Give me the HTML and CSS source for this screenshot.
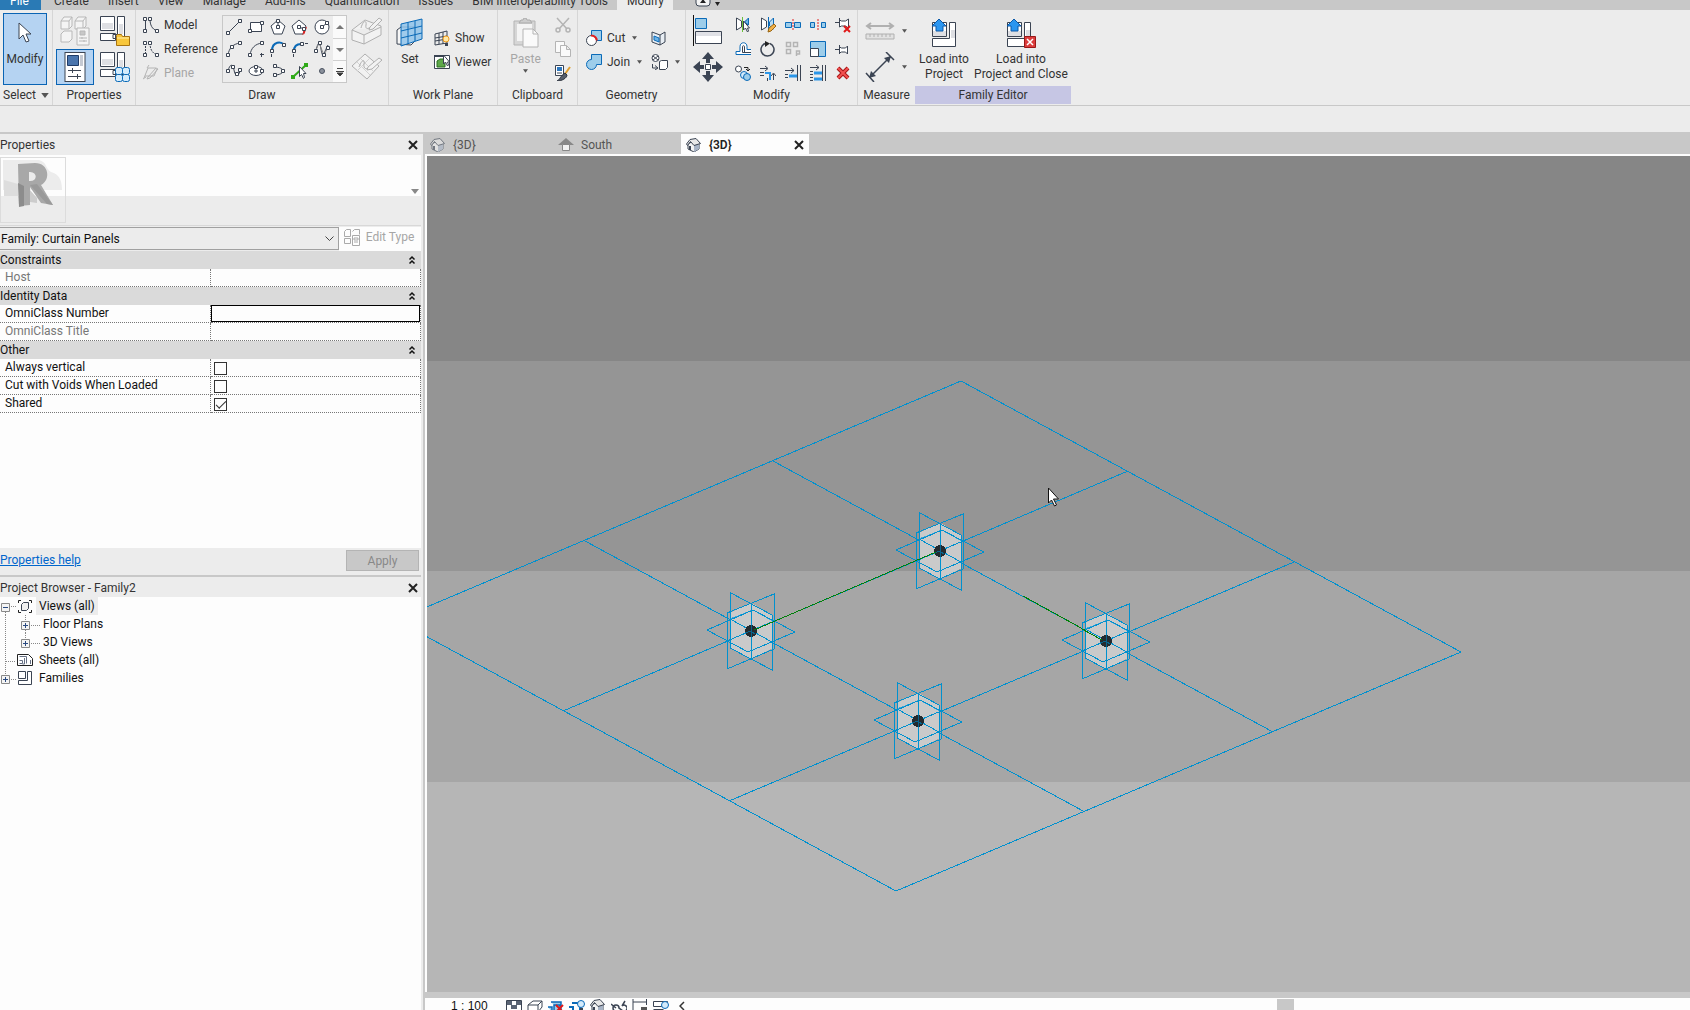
FILE: index.html
```html
<!DOCTYPE html>
<html lang="en">
<head>
<meta charset="utf-8">
<title>Family2 - Family Editor</title>
<link rel="stylesheet" href="styles.css">
</head>
<body>
<svg class="defs" aria-hidden="true">
  <symbol id="node" viewBox="0 0 4 4"><path d="M.5 .5h3v3h-3z" fill="#fff" stroke="#3b4453"/></symbol>
  <symbol id="caret" viewBox="0 0 6 4"><path d="M0 0h6L3 4z" fill="#555"/></symbol>
  <symbol id="close" viewBox="0 0 10 10"><path d="M1 1l8 8M9 1L1 9" stroke="#222" stroke-width="2" fill="none"/></symbol>
  <symbol id="fold" viewBox="0 0 8 10"><path d="M1.500 4.500L4 2l2.500 2.500M1.500 8.500L4 6l2.500 2.500" stroke="#111" stroke-width="1.500" fill="none"/></symbol>
  <symbol id="house" viewBox="0 0 16 14"><path d="M2 6v5l6 3 5-3V5L9 2z" fill="#f4f4f4" stroke="#3b4453"/><path d="M8 7v7l5-3V5z" fill="#a8b4c6"/><path d="M.5 6L4 1.500 10 .5l4.500 5L8 7.500 4.500 3.500 1.500 7.500z" fill="#e8e8e8" stroke="#3b4453"/><path d="M4 8v4" stroke="#3b4453" stroke-width="2"/></symbol>
  <symbol id="star" viewBox="-46 -42 92 84">
    <path d="M0-28L22-16V17L0 28-21 17V-18z" fill="#cacaca"/>
    <path d="M-21-12L2-21 22-10" stroke="#40a6da" fill="none"/><path d="M-21-12V17L0 28" stroke="#40a6da" fill="none"/>
    <path d="M-21-38.500L21-16V39L-21 17zM-24-18L23-37V18L-24 38zM-44-1L2-21 44 1-3 21zM0-28V28M-21-12L21 11M-24 10L23-10" fill="none" stroke="#0091cf"/>
    <circle r="6" fill="#242a2e"/><path d="M-6 2L0 0l4 3M0-6V6" stroke="#08638c" fill="none"/>
  </symbol>
</svg>

<header class="ribbon">
  <nav class="ribbon-tabs">
    <a class="tab tab-file" href="#file">File</a>
    <a class="tab" href="#create">Create</a>
    <a class="tab" href="#insert">Insert</a>
    <a class="tab" href="#view">View</a>
    <a class="tab" href="#manage">Manage</a>
    <a class="tab" href="#addins">Add-Ins</a>
    <a class="tab" href="#quant">Quantification</a>
    <a class="tab" href="#issues">Issues</a>
    <a class="tab" href="#bim">BIM Interoperability Tools</a>
    <a class="tab tab-active" href="#modify">Modify</a>
    <button class="tab-toggle" aria-label="Minimize ribbon"><svg width="26" height="14"><rect x="1" y="1" width="14" height="11" rx="3" fill="#f4f4f4" stroke="#3b4453"/><path d="M5 9h6L8 5z" fill="#222"/><path d="M20 8h5l-2.500 4z" fill="#222"/></svg></button>
  </nav>

  <div class="panels">
    <section class="panel p-select">
      <div class="panel-body">
        <button class="big selected"><span class="big-icon"><svg width="14" height="22"><path d="M1 1v16l4-4 3 7 3-1-3-7h5z" fill="#fff" stroke="#3b4453"/></svg></span>Modify</button>
      </div>
      <h2>Select <svg width="8" height="5"><use href="#caret"/></svg></h2>
    </section>

    <section class="panel p-props">
      <div class="panel-body icon-quad">
        <button aria-label="Type properties" disabled><svg width="30" height="30" fill="#f4f4f4" stroke="#b8b8b8"><path d="M1 5l3-4h8v9l-3 3H1zM15 5l3-4h8v9l-3 3h-8zM1 18l3-3h8v8l-3 3H1zM1 5h8v8M12 1L9 5M15 5h8v8M26 1l-3 4"/><path d="M17 12h12v17H17z"/><path d="M20 15h5v4h-5z" fill="#c8c8c8"/><path d="M19 22h8M19 25h8M22 21v2M24 24v2"/></svg></button>
        <button aria-label="Family category"><svg width="30" height="30"><g fill="#fff" stroke="#3b4453"><path d="M.5.500h14v14H.5zM17.500.500h7v22H13v-4h4.500zM.5 17.500h15v7H.5z"/></g><path d="M2 7h11v6H2zM19 8h4v10h-4z" fill="#dedfe3"/><path d="M16.500 29.500v-10l1-1h4l1 2h7v9z" fill="#f8c63a" stroke="#a87412"/><path d="M17 22h12" stroke="#fff0b0"/></svg></button>
        <button class="selected" aria-label="Properties"><svg width="22" height="30"><rect x="1" y=".500" width="20" height="29" fill="#fff" stroke="#3b4453"/><path d="M3.500 3.500h11v10h-11z" fill="#4a75ad" stroke="#203c68"/><path d="M16 3h3v11h-3z" fill="#c4c9d2"/><path d="M4 18.500h13M4 24.500h13M8.500 16v5M13.500 22v5" stroke="#3b4453"/></svg></button>
        <button aria-label="Family types"><svg width="30" height="30"><g fill="#fff" stroke="#3b4453"><path d="M.5.500h14v14H.5zM17.500.500h7v22H13v-4h4.500zM.5 17.500h15v7H.5z"/></g><path d="M2 7h11v6H2zM19 8h4v10h-4z" fill="#dedfe3"/><g fill="#d4ebfb" stroke="#0a6ab8"><rect x="15.500" y="15.500" width="7" height="7" rx="2"/><rect x="22.500" y="15.500" width="7" height="7" rx="2"/><rect x="15.500" y="22.500" width="7" height="7" rx="2"/><rect x="22.500" y="22.500" width="7" height="7" rx="2"/></g></svg></button>
      </div>
      <h2>Properties</h2>
    </section>

    <section class="panel p-draw">
      <div class="panel-body">
        <div class="stack three">
          <button class="small"><svg width="16" height="16" fill="none" stroke="#3b4453"><path d="M2.500 2v12M7 2c0 6 2 10 7 12"/><use href="#node" x="0" y="0" width="4" height="4"/><use href="#node" x="0" y="12" width="4" height="4"/><use href="#node" x="5" y="0" width="4" height="4"/><use href="#node" x="12" y="12" width="4" height="4"/></svg>Model</button>
          <button class="small"><svg width="16" height="16" fill="none" stroke="#3b4453"><path d="M2.500 2v12M7 2c0 6 2 10 7 12" stroke-dasharray="2 1"/><use href="#node" x="0" y="0" width="4" height="4"/><use href="#node" x="0" y="12" width="4" height="4"/><use href="#node" x="5" y="0" width="4" height="4"/><use href="#node" x="12" y="12" width="4" height="4"/></svg>Reference</button>
          <button class="small" disabled><svg width="16" height="16" fill="none" stroke="#b4b4b4"><path d="M1 13L5 3h8M2 11h9l3-7M0 14l3-2M4 3L6 0M5 12l8-9 2 1-8 9-3 1z"/></svg>Plane</button>
        </div>
        <div class="gallery">
          <div class="gallery-grid">
            <button aria-label="Line"><svg width="16" height="16"><path d="M2 14L14 2" stroke="#3b4453"/><use href="#node" y="12" width="4" height="4"/><use href="#node" x="12" width="4" height="4"/></svg></button>
            <button aria-label="Rectangle"><svg width="16" height="16"><path d="M2.500 3.500h11v9h-11z" fill="#fff" stroke="#3b4453"/><use href="#node" y="10" width="4" height="4"/><use href="#node" x="12" y="2" width="4" height="4"/></svg></button>
            <button aria-label="Inscribed polygon"><svg width="16" height="16"><path d="M8 1l7 6-3 8H4L1 7z" fill="#fff" stroke="#3b4453"/><path d="M8 2v7" stroke="#3b4453"/><use href="#node" x="6" y="6" width="4" height="4"/><use href="#node" x="6" width="4" height="4"/></svg></button>
            <button aria-label="Circumscribed polygon"><svg width="18" height="16"><path d="M8 1l7 6-3 8H4L1 7z" fill="#fff" stroke="#3b4453"/><path d="M8 8l5 2" stroke="#3b4453"/><path d="M15 8l-3 8" stroke="#e02020" stroke-width="2" stroke-dasharray="3 1"/><use href="#node" x="6" y="6" width="4" height="4"/><use href="#node" x="11" y="8" width="4" height="4"/></svg></button>
            <button aria-label="Circle"><svg width="16" height="16"><circle cx="8" cy="8" r="7" fill="#fff" stroke="#3b4453"/><path d="M8 8l5-4" stroke="#3b4453"/><use href="#node" x="6" y="6" width="4" height="4"/><use href="#node" x="11" y="2" width="4" height="4"/></svg></button>
            <button aria-label="Three point arc"><svg width="16" height="16"><path d="M2 14C3 7 7 3 14 2" stroke="#3b4453" fill="none"/><use href="#node" y="12" width="4" height="4"/><use href="#node" x="4" y="4" width="4" height="4"/><use href="#node" x="12" width="4" height="4"/></svg></button>
            <button aria-label="Center arc"><svg width="16" height="16"><path d="M2 14C3 7 7 3 14 2M12 13.500h4M13.500 12v4" stroke="#3b4453" fill="none"/><use href="#node" y="12" width="4" height="4"/><use href="#node" x="12" width="4" height="4"/></svg></button>
            <button aria-label="Tangent arc"><svg width="16" height="16"><path d="M2 10C2 0 12 0 14 4" stroke="#0a6ab8" stroke-width="2" fill="none"/><path d="M1.500 13v3" stroke="#3b4453"/><use href="#node" y="8" width="4" height="4"/><use href="#node" x="12" y="2" width="4" height="4"/></svg></button>
            <button aria-label="Fillet arc"><svg width="16" height="16"><path d="M2 10C2 5 5 3 9 3" stroke="#0a6ab8" stroke-width="2" fill="none"/><path d="M1.500 13v3M13 2.500h3" stroke="#3b4453"/><use href="#node" y="8" width="4" height="4"/><use href="#node" x="8" y="1" width="4" height="4"/></svg></button>
            <button aria-label="Spline"><svg width="16" height="16"><path d="M2 9C5-2 6 2 7 8s2 8 3 5 2-5 4-9" stroke="#3b4453" fill="none"/><path d="M2 9l3-7 5 12 4-8" stroke="#888" fill="none"/><use href="#node" y="8" width="4" height="4"/><use href="#node" x="4" width="4" height="4"/><use href="#node" x="8" y="12" width="4" height="4"/><use href="#node" x="12" y="5" width="4" height="4"/></svg></button>
            <button aria-label="Spline through points"><svg width="16" height="16"><path d="M2 8C4 0 7 1 8 7s4 8 6 1" stroke="#3b4453" fill="none"/><use href="#node" y="6" width="4" height="4"/><use href="#node" x="5" y="2" width="4" height="4"/><use href="#node" x="9" y="9" width="4" height="4"/><use href="#node" x="12" y="5" width="4" height="4"/></svg></button>
            <button aria-label="Ellipse"><svg width="16" height="16"><ellipse cx="8" cy="8" rx="7" ry="4.500" fill="#fff" stroke="#3b4453"/><path d="M6 8h4M8 6v4" stroke="#3b4453"/><use href="#node" x="6" y="2" width="4" height="4"/><use href="#node" x="12" y="6" width="4" height="4"/></svg></button>
            <button aria-label="Partial ellipse"><svg width="16" height="16"><path d="M4 4c12 0 12 8 0 8" fill="none" stroke="#3b4453"/><use href="#node" x="3" y="1" width="4" height="4"/><use href="#node" x="11" y="6" width="4" height="4"/><use href="#node" x="3" y="10" width="4" height="4"/></svg></button>
            <button aria-label="Pick lines"><svg width="18" height="16"><path d="M2 14L15 2" stroke="#2faa18" stroke-width="2"/><path d="M0 12h4v4H0zM13 0h4v4h-4z" fill="#2faa18"/><path d="M8.500 3.500v10l2-2 2 4 1-1-1-4h2.500z" fill="#fff" stroke="#3b4453"/></svg></button>
            <button aria-label="Point element"><svg width="16" height="16"><circle cx="8" cy="8" r="2.500" fill="#8a919c" stroke="#4a5260"/></svg></button>
          </div>
          <div class="gallery-scroll">
            <button aria-label="Scroll up"><svg width="8" height="4"><path d="M0 4h8L4 0z" fill="#777"/></svg></button>
            <button aria-label="Scroll down"><svg width="8" height="4"><path d="M0 0h8L4 4z" fill="#777"/></svg></button>
            <button aria-label="More"><svg width="8" height="10"><path d="M1 1.500h6" stroke="#444"/><path d="M0 4.500h8M1 6h6L4 9z" stroke="#444" fill="#333"/></svg></button>
          </div>
        </div>
        <div class="stack two">
          <button aria-label="Draw on face" disabled><svg width="32" height="30" fill="#f2f2f2" stroke="#b0b0b0"><path d="M1 14L14 4l16 6v9L13 28 1 24zM1 14l12 5 17-8M13 19v9"/><path d="M10 12c2-8 6-8 5-3s3 4 6 1" fill="none"/><path d="M19 11l9-9 3 2-9 9-4 1z"/></svg></button>
          <button aria-label="Draw on work plane" disabled><svg width="32" height="30" fill="#f2f2f2" stroke="#b0b0b0"><path d="M1 14L14 2l14 12-12 13z"/><path d="M6 10l13 13M10 7l13 13M6 19L19 6" stroke="#d2d2d2"/><path d="M8 15c3-8 6-8 5-3s3 6 6 3" fill="none"/><path d="M17 15l11-9 3 2-10 9-5 1z"/></svg></button>
        </div>
      </div>
      <h2>Draw</h2>
    </section>

    <section class="panel p-plane">
      <div class="panel-body">
        <button class="big"><span class="big-icon"><svg width="28" height="30"><path d="M1 12l4-3h14v14l-4 4-14-1z" fill="#f6f6f6" stroke="#3b4453"/><path d="M5 6l21-5v20L5 28z" fill="#8fc3ea" fill-opacity=".85" stroke="#0a6ab8"/><path d="M12 4v22M19 3v20M5 13l21-5M5 20l21-5" stroke="#0a6ab8"/></svg></span>Set</button>
        <div class="stack two-mid">
          <button class="small"><svg width="16" height="16"><path d="M1 4l12-3v12L1 15zM5 3v11M9 2v12M1 8l12-2M1 11l12-2" fill="none" stroke="#3b4453"/><circle cx="12" cy="9" r="3" fill="#ffe9a8" stroke="#f09a1a"/><path d="M11 13h3v3h-3z" fill="#3b4453"/></svg>Show</button>
          <button class="small"><svg width="16" height="16"><path d="M.5 1.500h15v13H.5z" fill="#fff" stroke="#3b4453"/><path d="M0 2h10" stroke="#3b4453" stroke-width="2"/><path d="M3 7l3-2h5v8H3z" fill="#5ea84a" stroke="#2b6e22"/><path d="M9.500 1v9l2-2 2 4 1-1-1-3h2z" fill="#fff" stroke="#3b4453"/></svg>Viewer</button>
        </div>
      </div>
      <h2>Work Plane</h2>
    </section>

    <section class="panel p-clip">
      <div class="panel-body">
        <button class="big" disabled><span class="big-icon"><svg width="26" height="30"><path d="M1 3h21v24H1z" fill="#d6d6d6" stroke="#b4b4b4"/><path d="M4 6h15v17H4z" fill="#f4f4f4"/><path d="M6 5l2-3h2l1-2h2l1 2h3l2 3z" fill="#ccc" stroke="#aaa"/><path d="M10 11h10l5 5v13H10z" fill="#fafafa" stroke="#b4b4b4"/><path d="M20 11v5h5" fill="none" stroke="#b4b4b4"/></svg></span>Paste<svg width="5" height="4"><use href="#caret"/></svg></button>
        <div class="stack three">
          <button class="small" aria-label="Cut to clipboard" disabled><svg width="16" height="16" fill="none" stroke="#b4b4b4" stroke-width="1.500"><path d="M2 1l10 11M14 1L4 12"/><circle cx="3" cy="13" r="2"/><circle cx="13" cy="13" r="2"/></svg></button>
          <button class="small" aria-label="Copy to clipboard" disabled><svg width="16" height="16" fill="#fafafa" stroke="#b4b4b4"><path d="M.5.500h9v11h-9z"/><path d="M5.500 4.500h6l4 4v7h-10zM11.500 4.500v4h4"/></svg></button>
          <button class="small" aria-label="Match type"><svg width="16" height="16"><path d="M.5.500h8v10h-8z" fill="#fff" stroke="#3b4453"/><path d="M2 2h5v4H2z" fill="#2d78c0"/><path d="M2 8h5" stroke="#3b4453"/><path d="M15 2l-5 7" stroke="#e0a030" stroke-width="2"/><path d="M10 8l2 2c0 3-5 6-10 6 3-1 3-5 8-8z" fill="#555d69" stroke="#2b323d"/></svg></button>
        </div>
      </div>
      <h2>Clipboard</h2>
    </section>

    <section class="panel p-geom">
      <div class="panel-body">
        <div class="stack two-mid">
          <button class="small"><svg width="16" height="16"><path d="M5.500.500h10v10h-10z" fill="#9dcdea" stroke="#0a6ab8"/><circle cx="5.500" cy="10.500" r="5" fill="#fff" stroke="#3b4453"/><path d="M5 5.500c4 0 6 3 5.500 5" fill="none" stroke="#e02020" stroke-width="2"/></svg>Cut<svg class="drop" width="5" height="4"><use href="#caret"/></svg></button>
          <button class="small"><svg width="16" height="16"><path d="M5.500.500h10v10h-5a5 5 0 1 1-5-5z" fill="#9dcdea" stroke="#0a6ab8"/></svg>Join<svg class="drop" width="5" height="4"><use href="#caret"/></svg></button>
        </div>
        <div class="stack two-mid">
          <button class="small" aria-label="Cope"><svg width="16" height="16"><path d="M1 2l8 3 5-3v10l-5 3-8-3z" fill="#e8eef4" stroke="#3b4453"/><path d="M9 5v10" stroke="#3b4453"/><path d="M3 6l5 2v4l-5-2z" fill="#6db4e8" stroke="#0a6ab8"/></svg></button>
          <button class="small" aria-label="Demolish"><svg width="17" height="16"><circle cx="4.500" cy="4" r="3.500" fill="#fff" stroke="#3b4453"/><path d="M2 2l5 4M7 2L2 6M1.500 10v4h5M4 11.500l3 2.500-3 2" fill="none" stroke="#3b4453"/><path d="M8.500 7.500l2-1h6v7l-2 2h-6z" fill="#fff" stroke="#3b4453"/></svg><svg class="drop" width="5" height="4"><use href="#caret"/></svg></button>
        </div>
      </div>
      <h2>Geometry</h2>
    </section>

    <section class="panel p-modify">
      <div class="panel-body">
        <div class="stack two">
          <button aria-label="Align"><svg width="30" height="32"><path d="M.5 0v31" stroke="#111"/><path d="M2.500 3.500h11v10h-11z" fill="#9dcdea" stroke="#0a6ab8"/><path d="M2.500 16.500h26v12h-26z" fill="#fff" stroke="#3b4453"/><path d="M3 17h25v4H3z" fill="#e0e1e6"/></svg></button>
          <button aria-label="Move"><svg width="30" height="30" fill="#3b4453"><path d="M15 0l6 7h-4v4h-4V7H9zM15 30l6-7h-4v-4h-4v4H9zM0 15l7-6v4h4v4H7v4zM30 15l-7-6v4h-4v4h4v4z"/><path d="M12.500 12.500h5v5h-5z" fill="#fff" stroke="#3b4453"/></svg></button>
        </div>
        <div class="tool-grid">
          <button aria-label="Mirror pick axis"><svg width="16" height="16"><path d="M1.500 1v12l5-3V4zM12.500 3v10l-3-3V5z" fill="#fff" stroke="#3b4453"/><path d="M7.500 0v15" stroke="#6abf3a"/><path d="M13.500 1v7l-4-3z" fill="#6db4e8" stroke="#0a6ab8"/><path d="M8.500 4v9l2-2 2 4 1-1-1-3h2z" fill="#fff" stroke="#3b4453"/></svg></button>
          <button aria-label="Mirror draw axis"><svg width="16" height="16"><path d="M1.500 1v12l5-3V4z" fill="#fff" stroke="#3b4453"/><path d="M8.500 0v14M13.500 1v11l-4-3V5z" fill="#b8dcf4" stroke="#0a6ab8"/><path d="M8 15l1-4 5-4 2 2-5 5z" fill="#f2b24a" stroke="#9a6410"/></svg></button>
          <button aria-label="Split element"><svg width="16" height="16"><path d="M.5 5.500h6v5h-6zM9.500 5.500h6v5h-6z" fill="#9dcdea" stroke="#0a6ab8"/><path d="M8 2v12" stroke="#e02020" stroke-dasharray="2 1"/></svg></button>
          <button aria-label="Split with gap"><svg width="16" height="16"><path d="M.5 5.500h4v5h-4zM11.500 5.500h4v5h-4z" fill="#9dcdea" stroke="#0a6ab8"/><path d="M8 2v12" stroke="#e02020" stroke-dasharray="2 1"/></svg></button>
          <button aria-label="Unpin"><svg width="16" height="16"><path d="M0 5.500h4M4.500 1v9M4.500 3l2 1h4l3-2v9l-3-2h-4l-2 1" fill="#fff" stroke="#3b4453"/><path d="M9 9l6 6M15 9l-6 6" stroke="#e01818" stroke-width="2"/></svg></button>
          <button aria-label="Offset"><svg width="16" height="16"><path d="M16 13.500H1V10.500h4v-5c0-5 7-5 7 0v3h4" fill="#fff" stroke="#0a6ab8"/><path d="M16 11.500H7.500v-6c0-1 2-1 2 0v6" fill="none" stroke="#3b4453"/></svg></button>
          <button aria-label="Rotate"><svg width="16" height="16"><path d="M10 2.500A6.500 6.500 0 1 1 5 2.500" fill="none" stroke="#3b4453" stroke-width="1.500"/><path d="M5 0l5 2.500L5 6z" fill="#222"/></svg></button>
          <button aria-label="Array" disabled><svg width="16" height="16" fill="none" stroke="#b4b4b4"><path d="M1.500 1.500h4v4h-4zM8.500 1.500h4v4h-4zM1.500 8.500h4v4h-4zM11.500 15v-5h3v3h-3" stroke-width="1.500"/></svg></button>
          <button aria-label="Scale"><svg width="16" height="16"><path d="M.5.500h15v15H.5z" fill="#9dcdea" stroke="#0a6ab8"/><path d="M.5 7.500h8v8h-8z" fill="#fff" stroke="#3b4453"/></svg></button>
          <button aria-label="Pin"><svg width="16" height="16"><path d="M0 8.500h4M4.500 4v9M4.500 6l2 1h4l2-2v8l-2-2h-4l-2 1" fill="#fff" stroke="#3b4453"/></svg></button>
          <button aria-label="Copy"><svg width="16" height="16"><circle cx="3.500" cy="4" r="3" fill="#fff" stroke="#3b4453"/><path d="M9 2.500h4v3M11 4l2 2 2-2" fill="none" stroke="#222"/><circle cx="9" cy="10" r="3.500" fill="#d4ebfb" stroke="#0a6ab8"/><circle cx="12" cy="12" r="3.500" fill="#9dcdea" stroke="#0a6ab8"/></svg></button>
          <button aria-label="Trim to corner"><svg width="16" height="16"><path d="M0 3.500h7M5 1l3 2.500L5 6M0 7.500h4M0 10.500h4M13.500 15V9M11 11l2.500-3 2.500 3M7.500 13v3" fill="none" stroke="#3b4453"/><path d="M5 8h5v7" fill="none" stroke="#2b96e8" stroke-width="2"/></svg></button>
          <button aria-label="Trim single"><svg width="16" height="16"><path d="M0 5.500h9M6 3l3 2.500L6 8M0 9.500h3M0 12.500h3M12.500 0v16M15.500 0v16" fill="none" stroke="#3b4453"/><path d="M4 11h8" stroke="#2b96e8" stroke-width="3"/></svg></button>
          <button aria-label="Trim multiple"><svg width="16" height="16"><path d="M0 2.500h9M6 0l3 2.500L6 5M0 6.500h3M0 9.500h3M0 12.500h3M0 15.500h3M12.500 0v16M15.500 0v16" fill="none" stroke="#3b4453"/><path d="M4 8h8M4 14h8" stroke="#2b96e8" stroke-width="3"/></svg></button>
          <button aria-label="Delete"><svg width="14" height="14"><path d="M2 2l10 10M12 2L2 12" stroke="#a81414" stroke-width="4"/><path d="M2 2l10 10M12 2L2 12" stroke="#f25050" stroke-width="2"/></svg></button>
        </div>
      </div>
      <h2>Modify</h2>
    </section>

    <section class="panel p-measure">
      <div class="panel-body">
        <div class="stack two">
          <button aria-label="Measure" disabled><svg width="30" height="18" fill="none" stroke="#b0b0b0"><path d="M2 4h26M6 1L2 4l4 3M24 1l4 3-4 3" stroke-width="2"/><path d="M1 12h28v5H1zM5 12v3M9 12v3M13 12v3M17 12v3M21 12v3M25 12v3" fill="#e2e2e2"/></svg><svg class="drop" width="5" height="4"><use href="#caret"/></svg></button>
          <button aria-label="Aligned dimension"><svg width="30" height="30"><path d="M5 25L25 5M1 21l8 9M21 0l8 8" stroke="#3b4453" stroke-width="1.500"/><path d="M4 26l2-7 5 5zM26 4l-7 2 5 5z" fill="#3b4453"/></svg><svg class="drop" width="5" height="4"><use href="#caret"/></svg></button>
        </div>
      </div>
      <h2>Measure</h2>
    </section>

    <section class="panel p-family">
      <div class="panel-body">
        <button class="big"><span class="big-icon"><svg width="26" height="30"><g fill="#fff" stroke="#3b4453"><path d="M1.500 4.500h14v14h-14zM18.500 4.500h6v24h-23v-8h17z"/></g><path d="M2 13h13v5H2zM20 12h4v8h-4z" fill="#dedfe3"/><path d="M8 1l7 7h-3v5H5V8H1z" fill="#2b96f0" stroke="#0a58a8"/></svg></span>Load into<br>Project</button>
        <button class="big"><span class="big-icon"><svg width="30" height="30"><g fill="#fff" stroke="#3b4453"><path d="M1.500 4.500h14v14h-14zM18.500 4.500h6v24h-23v-8h17z"/></g><path d="M2 13h13v5H2zM20 12h4v8h-4z" fill="#dedfe3"/><path d="M8 1l7 7h-3v5H5V8H1z" fill="#2b96f0" stroke="#0a58a8"/><path d="M18.500 18.500h11v11h-11z" fill="#dc3c3c" stroke="#981818"/><path d="M21 21l6 6M27 21l-6 6" stroke="#fff" stroke-width="1.500"/></svg></span>Load into<br>Project and Close</button>
      </div>
      <h2>Family Editor</h2>
    </section>
  </div>
  <div class="options-bar"></div>
</header>

<main class="workspace">
  <aside class="sidebar">
    <section class="palette properties">
      <header class="palette-title"><h3>Properties</h3><button aria-label="Close properties"><svg width="10" height="10"><use href="#close"/></svg></button></header>
      <div class="type-selector">
        <div class="thumb"><svg width="64" height="64"><path d="M2 2h36c8 2 6 8 12 12 8 2 11 8 11 18H2z" fill="#ececec"/><path d="M3 22l14 4v12H3z" fill="#ddd"/><path fill-rule="evenodd" d="M17 6l17-1c14 0 16 17 6 22l12 20-12-2-11-16v18l-11 1zM28 14v9c9 1 9-10 0-9z" fill="#a8a8a8"/><path d="M17 25l6 3v20l-5 1z" fill="#8c8c8c"/><path d="M29 27l7-1 16 21-6-1z" fill="#9a9a9a"/><path d="M29 32l7 8v5l-7-1z" fill="#ccc"/></svg></div>
        <button class="type-drop" aria-label="Type list"><svg width="8" height="5"><path d="M0 0h8L4 5z" fill="#888"/></svg></button>
      </div>
      <div class="family-row">
        <div class="combo"><select aria-label="Family"><option>Family: Curtain Panels</option></select><svg class="chev" width="9" height="6"><path d="M.5.500l4 4 4-4" fill="none" stroke="#444"/></svg></div>
        <button class="edit-type" disabled><svg width="17" height="17" fill="none" stroke="#aaa"><path d="M.5 2.500l2-2h4v7h-6zM8.500 2.500l2-2h5v5M.5 9.500h6v5h-6z"/><path d="M8.500 6.500h7v10h-7z" fill="#fff"/><path d="M10 9h4v2h-4zM10 13h4"/></svg>Edit Type</button>
      </div>
      <table class="props">
        <colgroup><col class="c-name"><col></colgroup>
        <tbody>
          <tr class="group"><th colspan="2"><div>Constraints<button aria-label="Collapse Constraints"><svg width="8" height="10"><use href="#fold"/></svg></button></div></th></tr>
          <tr class="muted"><td>Host</td><td></td></tr>
          <tr class="group"><th colspan="2"><div>Identity Data<button aria-label="Collapse Identity Data"><svg width="8" height="10"><use href="#fold"/></svg></button></div></th></tr>
          <tr><td><label for="omni">OmniClass Number</label></td><td><input id="omni" type="text"></td></tr>
          <tr class="muted"><td>OmniClass Title</td><td></td></tr>
          <tr class="group"><th colspan="2"><div>Other<button aria-label="Collapse Other"><svg width="8" height="10"><use href="#fold"/></svg></button></div></th></tr>
          <tr><td><label for="vert">Always vertical</label></td><td><input id="vert" type="checkbox"></td></tr>
          <tr><td><label for="voids">Cut with Voids When Loaded</label></td><td><input id="voids" type="checkbox"></td></tr>
          <tr><td><label for="shared">Shared</label></td><td><input id="shared" type="checkbox" checked></td></tr>
        </tbody>
      </table>
      <div class="filler"></div>
      <footer class="palette-foot"><a href="#help">Properties help</a><button class="apply" disabled>Apply</button></footer>
    </section>

    <section class="palette browser">
      <header class="palette-title"><h3>Project Browser - Family2</h3><button aria-label="Close project browser"><svg width="10" height="10"><use href="#close"/></svg></button></header>
      <ul class="tree">
        <li><svg width="36" height="18"><g fill="none" stroke="#888" stroke-dasharray="1 1"><path d="M11 9.500h6M5.500 15v3"/></g><path d="M1.500 6.500h8v8h-8z" fill="#f4f4f4" stroke="#888"/><path d="M3 10.500h5" stroke="#2a4a80"/><path d="M18.500 6V3.500H21M29 3.500h2.500V6M31.500 13v2.500H29M21 15.500h-2.500V13" fill="none" stroke="#222"/><path d="M21.500 7.500l2-2h5v6l-2 2h-5z" fill="#f0f0f0" stroke="#3b4453"/></svg><span class="picked">Views (all)</span></li>
        <li><svg width="42" height="18"><g fill="none" stroke="#888" stroke-dasharray="1 1"><path d="M5.500 0v18M25.500 0v5M25.500 15v3M31 10.500h9"/></g><path d="M21.500 6.500h8v8h-8z" fill="#f4f4f4" stroke="#888"/><path d="M23 10.500h5M25.500 8v5" stroke="#2a4a80"/></svg><span>Floor Plans</span></li>
        <li><svg width="42" height="18"><g fill="none" stroke="#888" stroke-dasharray="1 1"><path d="M5.500 0v18M25.500 0v5M31 10.500h9"/></g><path d="M21.500 6.500h8v8h-8z" fill="#f4f4f4" stroke="#888"/><path d="M23 10.500h5M25.500 8v5" stroke="#2a4a80"/></svg><span>3D Views</span></li>
        <li><svg width="38" height="18"><g fill="none" stroke="#888" stroke-dasharray="1 1"><path d="M5.500 0v18M6 10.500h10"/></g><path d="M17.500 3.500h11l4 4v7h-15z" fill="#fff" stroke="#222"/><path d="M19.500 5.500h7v7M19.500 9.500h3v3h-3M24.500 7v6h-2M30.500 9v4" fill="none" stroke="#667084"/></svg><span>Sheets (all)</span></li>
        <li><svg width="38" height="18"><g fill="none" stroke="#888" stroke-dasharray="1 1"><path d="M5.500 0v5M11 10.500h6"/></g><path d="M1.500 6.500h8v8h-8z" fill="#f4f4f4" stroke="#888"/><path d="M3 10.500h5M5.500 8v5" stroke="#2a4a80"/><path d="M18.500 2.500h7v7h-7zM27.500 2.500h4v13h-13v-4h9z" fill="#fff" stroke="#3b4453"/></svg><span>Families</span></li>
      </ul>
    </section>
  </aside>

  <section class="views">
    <nav class="view-tabs">
      <a href="#v1"><svg class="dim" width="16" height="14"><use href="#house"/></svg>{3D}</a>
      <a href="#v2"><svg width="16" height="14"><path d="M0 7L8 0l8 7z" fill="#888"/><path d="M4.500 6.500h7v6h-7z" fill="#f2f2f2" stroke="#888"/></svg>South</a>
      <a class="current" href="#v3"><svg width="16" height="14"><use href="#house"/></svg>{3D}<button aria-label="Close view"><svg width="10" height="10"><use href="#close"/></svg></button></a>
    </nav>
    <div class="canvas">
      <svg width="100%" height="100%">
        <g transform="translate(-427 -156)" shape-rendering="crispEdges">
          <g fill="none" stroke="#0091cf">
            <path d="M961 381L1461 652 896 891 396 620z"/>
            <path d="M773 461L1273 732M585 541L1085 812M1128 471L563 711M1294 562L729 801"/>
          </g>
          <path d="M1023 596L1103 640" stroke="#00800a"/>
          <use href="#star" x="894" y="509" width="92" height="84"/>
          <use href="#star" x="705" y="589" width="92" height="84"/>
          <use href="#star" x="1060" y="599" width="92" height="84"/>
          <use href="#star" x="872" y="679" width="92" height="84"/>
          <path d="M936 552L754 630M1082 629l20 11" stroke="#00800a"/>
        </g>
        <path d="M621.500 332v15l3-3 3 6 2-1-3-6h5z" fill="#fff" stroke="#111"/>
      </svg>
    </div>
    <footer class="view-bar">
      <button class="scale">1 : 100</button>
      <button aria-label="Detail level"><svg width="16" height="14"><path d="M.5 1.500h15v12H.5z" fill="#fff" stroke="#3b4453"/><path d="M1 2h5v4H1zM10 2h5v4h-5zM5 6h6v4H5z" fill="#5a6474"/></svg></button>
      <button aria-label="Visual style"><svg width="16" height="14"><path d="M1 6l5-4h9v6l-4 5H1zM1 6h10v7M11 6l4-4" fill="#fff" stroke="#3b4453"/></svg></button>
      <button aria-label="Crop view"><svg width="16" height="14"><path d="M3 3h10v10M0 8h4v5M6 6h6v7H6z" fill="#9dcdea" stroke="#0a6ab8" stroke-width="1.500"/><path d="M8 6l7 7M15 6l-7 7" stroke="#e01818" stroke-width="2"/></svg></button>
      <button aria-label="Show crop region"><svg width="16" height="14"><path d="M3 4h8v9M0 8h4v5" fill="none" stroke="#0a6ab8" stroke-width="2"/><circle cx="12" cy="5" r="3.500" fill="#d4ebfb" stroke="#0a6ab8"/><path d="M11 9h3v5h-3z" fill="#3b4453"/></svg></button>
      <button aria-label="Locked view"><svg width="16" height="14"><use href="#house"/></svg></button>
      <button aria-label="Temporary hide"><svg width="16" height="14"><path d="M0 5l5 4M5 12a3 3 0 1 1 3-3l4 3a3 3 0 1 0-1-5L14 2" fill="none" stroke="#3b4453" stroke-width="1.500"/></svg></button>
      <button aria-label="Constraints"><svg width="16" height="14"><path d="M1 3h14M1 0v14M14.500 0v6" fill="none" stroke="#3b4453"/><path d="M9 8h6v6H9z" fill="#555"/><path d="M2 12h6" stroke="#888" stroke-dasharray="2 1"/></svg></button>
      <button aria-label="Preview visibility"><svg width="16" height="14"><path d="M.5 2.500h14v5H.5zM.5 10.500h10" fill="#fff" stroke="#3b4453"/><circle cx="12" cy="6" r="3.500" fill="#d4ebfb" stroke="#0a6ab8"/></svg></button>
      <button aria-label="Collapse bar"><svg width="6" height="10"><path d="M5 1L1 5l4 4" fill="none" stroke="#333" stroke-width="1.500"/></svg></button>
      <div class="hscroll"><div class="hthumb"></div></div>
    </footer>
  </section>
</main>
</body>
</html>
```
FILE: styles.css
```css
* { box-sizing: border-box; }
body {
  margin: 0;
  height: 100vh;
  display: flex;
  flex-direction: column;
  overflow: hidden;
  background: #ececec;
  color: #333;
  font: 12px/18px Roboto, "Open Sans", sans-serif;
}
.defs { display: none; }
svg { display: block; flex: none; }
button {
  display: flex;
  align-items: center;
  justify-content: center;
  margin: 0;
  padding: 0;
  border: 0;
  background: none;
  color: inherit;
  font: inherit;
}
a { color: inherit; text-decoration: none; }
h2, h3 { margin: 0; font: inherit; }

/* Ribbon */
.ribbon { flex: none; }
.ribbon-tabs {
  display: flex;
  align-items: flex-end;
  height: 10px;
  overflow: hidden;
  background: #c8c8c8;
  white-space: nowrap;
}
.tab { padding: 0 9px 0 10px; height: 18px; }
.tab-file { width: 41px; margin-right: 3px; background: #2a7ab5; color: #fff; }
.tab-active { background: #ececec; }
.tab-toggle { margin-left: 22px; height: 18px; }

.panels {
  display: flex;
  height: 96px;
  border-bottom: 1px solid #c8c8c8;
}
.panel {
  display: flex;
  flex-direction: column;
  flex: none;
  padding: 1px 0;
}
.panel:nth-child(-n+7) { border-right: 1px solid #d6d6d6; }
.panel-body { display: flex; height: 75px; padding-top: 2px; }
.panel h2 {
  display: flex;
  align-items: center;
  justify-content: center;
  gap: 5px;
  height: 18px;
}
.p-select { width: 53px; }
.p-props { width: 83px; }
.p-draw { width: 253px; }
.p-plane { width: 109px; }
.p-clip { width: 80px; }
.p-geom { width: 108px; }
.p-modify { width: 172px; }
.p-measure { width: 57px; }
.p-family { width: 156px; }
.p-family h2 { background: #c6c6e4; }

.big {
  flex-direction: column;
  justify-content: flex-start;
  height: 72px;
  line-height: 15px;
  white-space: nowrap;
}
.big-icon { display: flex; align-items: center; justify-content: center; height: 39px; }
.selected { background: #b5d3f2; outline: 1px solid #0a64b4; outline-offset: -1px; }
button:disabled { color: #a6a6a6; }
.small { height: 24px; gap: 5px; justify-content: flex-start; white-space: nowrap; }
.stack { display: flex; flex-direction: column; height: 72px; }
.stack.two > button { height: 36px; }
.stack.two-mid { padding-top: 13px; }

.p-select .panel-body { padding-left: 3px; }
.p-select .big { width: 44px; }
.icon-quad {
  display: grid;
  grid-template: 36px 36px / 38px 38px;
  column-gap: 2px;
  padding-left: 3px;
}
.p-draw .panel-body { padding-left: 7px; }
.p-draw .three { width: 79px; }
.p-draw .two { margin-left: 4px; }
.gallery {
  display: flex;
  height: 68px;
  margin-top: 2px;
  border: 1px solid #c8c8c8;
}
.gallery-grid { display: grid; grid-template: repeat(3, 22px) / repeat(5, 22px); }
.gallery-scroll { display: grid; grid-template: repeat(3, 22px) / 13px; background: #fafafa; }
.gallery-scroll button + button { border-top: 1px solid #d0d0d0; }
.p-plane .big { width: 42px; }
.p-plane .two-mid { margin-left: 3px; }
.p-clip .big { width: 55px; }
.p-clip .big > svg { margin-top: 2px; }
.p-clip .three { margin-left: 2px; }
.p-geom .panel-body { padding-left: 8px; }
.p-geom .two-mid:first-child { width: 65px; }
.p-geom .drop { margin-left: 2px; }
.p-modify .panel-body { padding-left: 7px; }
.tool-grid {
  display: grid;
  grid-template: repeat(3, 24px) / repeat(5, 25px);
  margin-left: 7px;
}
.p-measure .panel-body { padding-left: 7px; }
.p-measure .drop { margin-left: 7px; }
.p-family .big { width: 96px; }
.p-family .big:first-child { width: 58px; }
.options-bar { height: 28px; border-bottom: 2px solid #c8c8c8; }

/* Docked palettes */
.workspace { display: flex; flex: 1; min-height: 0; }
.sidebar {
  display: flex;
  flex-direction: column;
  flex: none;
  width: 425px;
  padding-right: 2px;
  border-right: 2px solid #c8c8c8;
}
.palette { display: flex; flex-direction: column; }
.properties { flex: none; height: 443px; border-bottom: 2px solid #c8c8c8; }
.browser { flex: 1; min-height: 0; }
.palette-title {
  display: flex;
  align-items: center;
  justify-content: space-between;
  flex: none;
  height: 21px;
  padding-right: 3px;
}
.type-selector {
  display: flex;
  justify-content: space-between;
  flex: none;
  height: 71px;
  padding-top: 2px;
  border-bottom: 1px solid #d8d8d8;
  background: linear-gradient(#fdfdfd 41px, #ececec 41px);
}
.thumb { width: 66px; height: 66px; border: 1px solid #dcdcdc; }
.type-drop { width: 12px; height: 68px; }
.family-row { display: flex; flex: none; height: 25px; padding-top: 1px; }
.combo { display: flex; align-items: center; width: 339px; height: 23px; border: 1px solid #a0a0a0; border-left: 0; }
.combo select {
  flex: 1;
  height: 21px;
  padding: 0 0 0 1px;
  border: 0;
  appearance: none;
  background: none;
  color: #111;
  font: inherit;
}
.chev { margin-right: 4px; }
.edit-type { flex: 1; gap: 5px; padding: 0 2px 4px 0; background: #fdfdfd; color: #a6a6a6; }
.props {
  width: 100%;
  table-layout: fixed;
  border-spacing: 0;
  background: #fdfdfd;
  color: #111;
}
.c-name { width: 211px; }
.props tr { height: 18px; }
.props th, .props td { height: 18px; padding: 0; line-height: 17px; font-weight: 400; text-align: left; }
.props th { background: #dadada; }
.props th div { display: flex; justify-content: space-between; padding-right: 5px; }
.props td { border-bottom: 1px dotted #777; border-right: 1px dotted #777; }
.props td:first-child { padding-left: 5px; }
.props .muted { color: #777; }
.props input { display: block; margin: 0; appearance: none; background: #fdfdfd; }
.props input[type="text"] { width: 100%; height: 17px; padding: 0 2px; border: 1px solid #000; font: inherit; }
.props input[type="checkbox"] { width: 13px; height: 13px; margin: 3px 0 1px 3px; border: 1px solid #333; }
.props input:checked::before {
  content: "";
  display: block;
  width: 9px;
  height: 4px;
  margin: 2px 1px;
  border: solid #333;
  border-width: 0 0 1px 1px;
  transform: rotate(-45deg);
}
.filler { flex: 1; background: #fdfdfd; }
.palette-foot { display: flex; justify-content: space-between; flex: none; height: 27px; padding: 2px 2px 4px 0; }
.palette-foot a { line-height: 20px; color: #0066cc; text-decoration: underline; }
.apply { width: 73px; border: 1px solid #b4b4b4; background: #c8c8c8; }
.apply:disabled { color: #888; }
.browser .palette-title { height: 20px; padding-top: 2px; }
.tree { flex: 1; margin: 0; padding: 0; list-style: none; background: #fdfdfd; color: #111; }
.tree li { display: flex; height: 18px; white-space: nowrap; }
.tree span { padding: 0 3px 0 1px; }
.tree .picked { padding-left: 3px; background: #ececec; }

/* Views */
.views { display: flex; flex-direction: column; flex: 1; min-width: 0; }
.view-tabs { display: flex; flex: none; height: 20px; background: #c8c8c8; }
.view-tabs a {
  display: flex;
  align-items: center;
  gap: 7px;
  width: 128px;
  padding: 1px 5px 0;
  color: #555;
}
.view-tabs .current { background: #fdfdfd; color: #222; font-weight: 600; }
.view-tabs button { margin-left: auto; }
.dim { opacity: .6; }
.canvas {
  flex: 1;
  min-height: 0;
  overflow: hidden;
  border: solid #fdfdfd;
  border-width: 2px 0 0 2px;
  background: linear-gradient(#868686 24.5%, #959595 24.5% 49.6%, #a6a6a6 49.6% 74.9%, #b6b6b6 74.9%);
}
.view-bar {
  display: flex;
  flex: none;
  height: 18px;
  gap: 5px;
  padding-left: 26px;
  overflow: hidden;
  border-top: 6px solid #c8c8c8;
  background: #fdfdfd;
}
.view-bar button { flex: none; width: 16px; height: 16px; }
.view-bar .scale {
  width: 50px;
  justify-content: flex-start;
  color: #111;
  font-family: "Liberation Sans", sans-serif;
}
.hscroll { flex: 1; }
.hthumb { width: 17px; height: 17px; margin: 1px 0 0 58.5%; background: #c8c8c8; }
```
